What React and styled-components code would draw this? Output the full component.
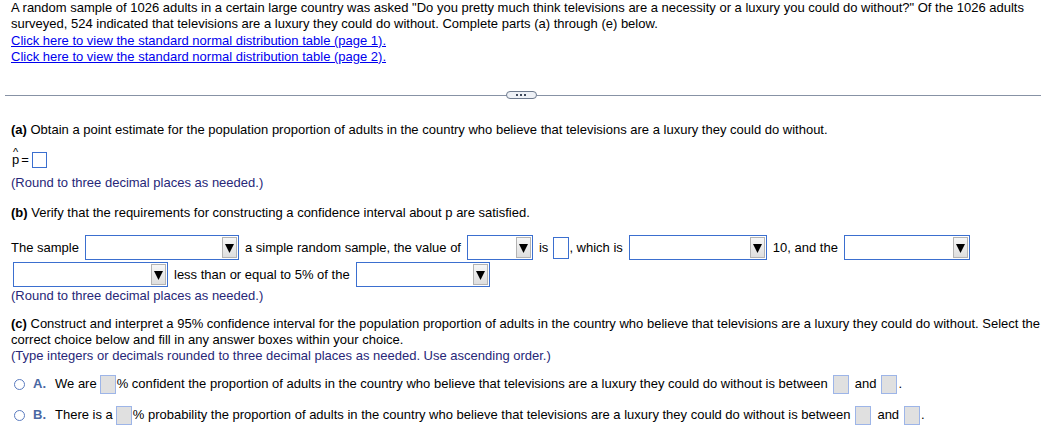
import React from 'react'
import styled, { createGlobalStyle } from 'styled-components'

const Global = createGlobalStyle`
  html, body {
    margin: 0;
    padding: 0;
    background: #fff;
  }
  body {
    font-family: "Liberation Sans", Arial, sans-serif;
    font-size: 13px;
    line-height: 16px;
    color: #000;
  }
`

const Page = styled.div`
  padding: 0 0 0 11px;
  width: 1030px;
`

const Para = styled.div`
  margin-top: ${p => p.top || 0}px;
`

const Links = styled.div`
  margin-top: 1px;
  display: flex;
  flex-direction: column;
  align-items: flex-start;
`

const TableLink = styled.a`
  color: #0000ee;
  text-decoration: underline;
  cursor: pointer;
`

const Divider = styled.div`
  margin: 25px 0 0 -6px;
  height: 10px;
  display: flex;
  align-items: center;
  width: 1036px;

  &::before, &::after {
    content: "";
    flex: 1;
    height: 1px;
    background: #8792a5;
  }
`

const MoreButton = styled.div`
  width: 29px;
  height: 6px;
  margin-left: -4px;
  border: 1px solid #6d7a8e;
  border-radius: 5px;
  background: #eef1f6;
  display: flex;
  align-items: center;
  justify-content: center;
  gap: 2px;

  span {
    width: 2px;
    height: 2px;
    background: #3f4a5c;
  }
`

const Part = styled.b`
  font-weight: bold;
`

const Hint = styled.div`
  color: #272778;
  margin-top: ${p => p.top || 0}px;
`

const Row = styled.div`
  display: flex;
  align-items: center;
  gap: ${p => p.gap ?? 6}px;
  height: ${p => p.h || 25}px;
  margin-top: ${p => p.top || 0}px;
  padding-left: ${p => p.indent || 0}px;
  white-space: nowrap;
`

const PHat = styled.span`
  position: relative;
  display: inline-block;

  &::before {
    content: "^";
    position: absolute;
    left: 1px;
    top: -8px;
    font-size: 11px;
  }
`

const AnswerBox = styled.span`
  display: inline-block;
  width: ${p => p.w || 14}px;
  height: ${p => p.h || 15}px;
  border: 1px solid #3b6fcf;
  background: #fff;
  box-sizing: border-box;
`

const SelectBox = styled.div`
  width: ${p => p.w}px;
  height: 25px;
  box-sizing: border-box;
  border: 1px solid #3b6fcf;
  background: #fff;
  display: flex;
  justify-content: flex-end;
  align-items: center;
  padding-right: 1px;
  flex-shrink: 0;
`

const ArrowButton = styled.div`
  width: 15px;
  height: 21px;
  box-sizing: border-box;
  border: 1px solid #b3b3b3;
  background: linear-gradient(#f7f7f7, #dedede);
  display: flex;
  align-items: center;
  justify-content: center;
`

const Choice = styled.div`
  display: flex;
  align-items: center;
  height: 20px;
  margin-top: ${p => p.top || 0}px;
  white-space: nowrap;
`

const Radio = styled.span`
  width: 9px;
  height: 9px;
  border: 1px solid #5a7bbf;
  border-radius: 50%;
  background: #fff;
  margin: 0 8px 0 3px;
  flex-shrink: 0;
`

const Letter = styled.span`
  font-weight: bold;
  color: #4a68a3;
  width: 22px;
`

const GrayBox = styled.span`
  display: inline-block;
  width: 16px;
  height: 19px;
  box-sizing: border-box;
  background: #e0e0e0;
  border: 1px solid #9db5e8;
  margin: 0 ${p => p.mr ?? 1}px 0 ${p => p.ml ?? 3}px;
  flex-shrink: 0;
`

const Comma = styled.span`
  margin-left: -6px;
`

function Select({ w }) {
  return (
    <SelectBox w={w}>
      <ArrowButton>
        <svg width="9" height="10" viewBox="0 0 9 10">
          <path d="M0 1 H9 L4.5 10 Z" fill="#000" />
        </svg>
      </ArrowButton>
    </SelectBox>
  )
}

export default function App() {
  return (
    <>
      <Global />
      <Page>
        <Para>
          A random sample of 1026 adults in a certain large country was asked "Do you pretty much think televisions are a necessity or a luxury you could do without?" Of the 1026 adults surveyed, 524 indicated that televisions are a luxury they could do without. Complete parts (a) through (e) below.
        </Para>
        <Links>
          <TableLink>Click here to view the standard normal distribution table (page 1).</TableLink>
          <TableLink>Click here to view the standard normal distribution table (page 2).</TableLink>
        </Links>

        <Divider>
          <MoreButton><span /><span /><span /></MoreButton>
        </Divider>

        <Para top={22}>
          <Part>(a)</Part> Obtain a point estimate for the population proportion of adults in the country who believe that televisions are a luxury they could do without.
        </Para>
        <Row top={13} h={18} gap={2} indent={1}>
          <PHat>p</PHat>
          <span>=</span>
          <AnswerBox w={15} h={16} style={{ marginLeft: 1 }} />
        </Row>
        <Hint top={6}>(Round to three decimal places as needed.)</Hint>

        <Para top={14}>
          <Part>(b)</Part> Verify that the requirements for constructing a confidence interval about p are satisfied.
        </Para>
        <Row top={14}>
          <span>The sample</span>
          <Select w={154} />
          <span>a simple random sample, the value of</span>
          <Select w={66} />
          <span>is</span>
          <AnswerBox w={16} h={22} style={{ marginLeft: -1 }} />
          <Comma>, which is</Comma>
          <Select w={138} />
          <span>10, and the</span>
          <Select w={126} />
        </Row>
        <Row top={2} indent={2}>
          <Select w={155} />
          <span>less than or equal to 5% of the</span>
          <Select w={134} />
        </Row>
        <Hint top={1}>(Round to three decimal places as needed.)</Hint>

        <Para top={12}>
          <Part>(c)</Part> Construct and interpret a 95% confidence interval for the population proportion of adults in the country who believe that televisions are a luxury they could do without. Select the correct choice below and fill in any answer boxes within your choice.
        </Para>
        <Hint>(Type integers or decimals rounded to three decimal places as needed. Use ascending order.)</Hint>

        <Choice top={10}>
          <Radio />
          <Letter>A.</Letter>
          <span>We are</span>
          <GrayBox />
          <span>% confident the proportion of adults in the country who believe that televisions are a luxury they could do without is between</span>
          <GrayBox ml={5} mr={6} />
          <span>and</span>
          <GrayBox ml={5} />
          <span>.</span>
        </Choice>
        <Choice top={11}>
          <Radio />
          <Letter>B.</Letter>
          <span>There is a</span>
          <GrayBox />
          <span>% probability the proportion of adults in the country who believe that televisions are a luxury they could do without is between</span>
          <GrayBox ml={5} mr={6} />
          <span>and</span>
          <GrayBox ml={5} />
          <span>.</span>
        </Choice>
      </Page>
    </>
  )
}
